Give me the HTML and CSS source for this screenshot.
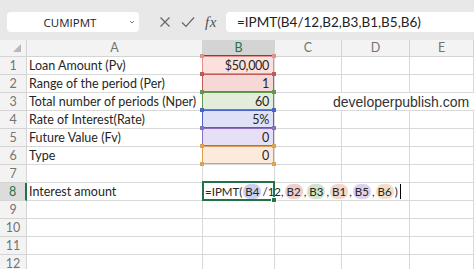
FILE: index.html
```html
<!DOCTYPE html>
<html>
<head>
<meta charset="utf-8">
<link rel="stylesheet" href="styles.css">
</head>
<body>
<div class="app">
  <div class="toolbar">
    <div class="namebox">
      <span class="name">CUMIPMT</span>
      <svg class="caret" width="6" height="4" viewBox="0 0 6 4"><path d="M1 1 L3 3 L5 1" fill="none" stroke="#777" stroke-width="1"/></svg>
    </div>
    <div class="fxicons">
      <svg class="ico" width="12" height="12" viewBox="0 0 12 12"><path d="M1.5 1.5 L10.5 10.5 M10.5 1.5 L1.5 10.5" stroke="#666" stroke-width="1.2" fill="none"/></svg>
      <svg class="ico" width="14" height="12" viewBox="0 0 14 12"><path d="M1 6.5 L5 10.5 L13 1.5" stroke="#666" stroke-width="1.2" fill="none"/></svg>
      <span class="fx">fx</span>
    </div>
    <div class="formula">=IPMT(B4/12,B2,B3,B1,B5,B6)</div>
  </div>

  <div class="sheet">
    <div class="c hdr corner"><span class="tri"></span></div>
    <div class="c hdr col">A</div>
    <div class="c hdr col active">B</div>
    <div class="c hdr col">C</div>
    <div class="c hdr col">D</div>
    <div class="c hdr col">E</div>

    <div class="c hdr rn">1</div>
    <div class="c txt">Loan Amount (Pv)</div>
    <div class="c num hl h1">$50,000</div>
    <div class="c"></div><div class="c"></div><div class="c"></div>

    <div class="c hdr rn">2</div>
    <div class="c txt">Range of the period (Per)</div>
    <div class="c num hl h2">1</div>
    <div class="c"></div><div class="c"></div><div class="c"></div>

    <div class="c hdr rn">3</div>
    <div class="c txt">Total number of periods (Nper)</div>
    <div class="c num hl h3">60</div>
    <div class="c wm">developerpublish.com</div>

    <div class="c hdr rn">4</div>
    <div class="c txt">Rate of Interest(Rate)</div>
    <div class="c num hl h4">5%</div>
    <div class="c"></div><div class="c"></div><div class="c"></div>

    <div class="c hdr rn">5</div>
    <div class="c txt">Future Value (Fv)</div>
    <div class="c num hl h5">0</div>
    <div class="c"></div><div class="c"></div><div class="c"></div>

    <div class="c hdr rn">6</div>
    <div class="c txt">Type</div>
    <div class="c num hl h6">0</div>
    <div class="c"></div><div class="c"></div><div class="c"></div>

    <div class="c hdr rn">7</div>
    <div class="c"></div><div class="c"></div><div class="c"></div><div class="c"></div><div class="c"></div>

    <div class="c hdr rn active">8</div>
    <div class="c txt">Interest amount</div>
    <div class="c txt edit">=IPMT(<span class="ref r4">B4</span>/12,<span class="ref r2">B2</span>,<span class="ref r3">B3</span>,<span class="ref r1">B1</span>,<span class="ref r5">B5</span>,<span class="ref r6">B6</span>)<span class="cursor"></span></div>
    <div class="c span2"></div><div class="c"></div>

    <div class="c hdr rn">9</div>
    <div class="c"></div><div class="c"></div><div class="c"></div><div class="c"></div><div class="c"></div>
    <div class="c hdr rn">10</div>
    <div class="c"></div><div class="c"></div><div class="c"></div><div class="c"></div><div class="c"></div>
    <div class="c hdr rn">11</div>
    <div class="c"></div><div class="c"></div><div class="c"></div><div class="c"></div><div class="c"></div>
    <div class="c hdr rn">12</div>
    <div class="c"></div><div class="c"></div><div class="c"></div><div class="c"></div><div class="c"></div>
  </div>
</div>
</body>
</html>
```
FILE: styles.css
```css
* { box-sizing: border-box; }
html, body { margin: 0; padding: 0; background: #fff; }
body { width: 474px; height: 269px; overflow: hidden; font-family: "Lato", "Open Sans", sans-serif; }

.toolbar {
  height: 40px;
  background: #e8e8e8;
  display: flex;
  align-items: flex-start;
  padding: 12px 0 0 7px;
}
.namebox {
  width: 132px;
  height: 20px;
  background: #fff;
  border-radius: 4px;
  display: flex;
  align-items: center;
  padding: 0 4px 0 0;
}
.namebox .name {
  flex: 1;
  text-align: center;
  font-family: "Open Sans", sans-serif;
  font-size: 11.5px;
  color: #222;
  padding-left: 4px;
}
.fxicons {
  width: 87px;
  height: 20px;
  display: flex;
  align-items: center;
  padding-left: 20px;
  gap: 10px;
}
.fx {
  font-family: "Liberation Serif", serif;
  font-style: italic;
  font-size: 15px;
  color: #555;
  letter-spacing: 0.5px;
}
.formula {
  flex: 1;
  height: 20px;
  background: #fff;
  border-radius: 4px 0 0 4px;
  font-size: 13.5px;
  color: #222;
  line-height: 20px;
  padding-left: 11px;
}

.sheet {
  display: grid;
  grid-template-columns: 27px 176px 72px 67px 68px 64px;
  grid-template-rows: 17px repeat(12, 18px);
}
.c {
  border-right: 1px solid #d9d9d9;
  border-bottom: 1px solid #d9d9d9;
  font-size: 12.5px;
  line-height: 18px;
  color: #262626;
  white-space: nowrap;
  position: relative;
}
.hdr {
  background: #f3f3f3;
  color: #737373;
  text-align: center;
  font-size: 12.5px;
  border-color: #d4d4d4;
}
.col { line-height: 16px; }
.col.active {
  background: #d4d4d4;
  color: #217346;
  border-bottom: 2px solid #217346;
}
.rn.active {
  background: #dcdcdc;
  color: #217346;
  border-right: 2px solid #217346;
}
.corner .tri {
  position: absolute;
  right: 5px;
  bottom: 4px;
  width: 0; height: 0;
  border-left: 8px solid transparent;
  border-bottom: 8px solid #b8b8b8;
}
.txt { padding-left: 2px; }
.num {
  text-align: right;
  padding-right: 5px;
  font-size: 12.5px;
  letter-spacing: -0.3px;
}

.hl { background: var(--f); }
.hl::after {
  content: "";
  position: absolute;
  left: -1px; top: -1px; right: 0; bottom: 0;
  border: 1px solid var(--b);
  pointer-events: none;
}
.hl::before {
  content: "";
  position: absolute;
  left: -3px; top: -3px; right: -2px; bottom: -2px;
  background:
    linear-gradient(var(--b), var(--b)) 0 0 / 4px 4px no-repeat,
    linear-gradient(var(--b), var(--b)) 100% 0 / 4px 4px no-repeat,
    linear-gradient(var(--b), var(--b)) 0 100% / 4px 4px no-repeat,
    linear-gradient(var(--b), var(--b)) 100% 100% / 4px 4px no-repeat;
  z-index: 2;
}
.h1 { --f: #fbe0db; --b: #e2928b; }
.h2 { --f: #f6d9d6; --b: #bf5b56; }
.h3 { --f: #e2eedb; --b: #5f9a4a; }
.h4 { --f: #dee1f7; --b: #4a63c8; }
.h5 { --f: #e6dff5; --b: #8a6fbd; }
.h6 { --f: #fcebdc; --b: #dca24f; }

.wm {
  grid-column: span 3;
  border-right: none;
  font-family: "Liberation Sans", Arial, sans-serif;
  font-size: 14px;
  color: #333;
  padding-left: 58px;
  line-height: 18px;
}

.edit { z-index: 3; overflow: visible; font-size: 11.5px; }
.edit::after {
  content: "";
  position: absolute;
  left: -1px; top: -2px; right: -1px; bottom: -1px;
  border: 2px solid #217346;
}
.edit::before {
  content: "";
  position: absolute;
  right: -3px; bottom: -3px;
  width: 4px; height: 4px;
  background: #217346;
  border: 1px solid #fff;
  z-index: 1;
}
.span2 { grid-column: span 2; }
.ref {
  display: inline-block;
  border-radius: 7px;
  padding: 0 2px;
  margin: 0 1px;
  line-height: 15px;
}
.r4 { background: #c9d1f2; }
.r2 { background: #f0cfcb; }
.r3 { background: #d3e4cd; }
.r1 { background: #f5d6cd; }
.r5 { background: #dcd2ef; }
.r6 { background: #f3dfc8; }
.cursor {
  display: inline-block;
  width: 1px;
  height: 15px;
  background: #000;
  vertical-align: -3px;
  margin-left: 2px;
}
```
